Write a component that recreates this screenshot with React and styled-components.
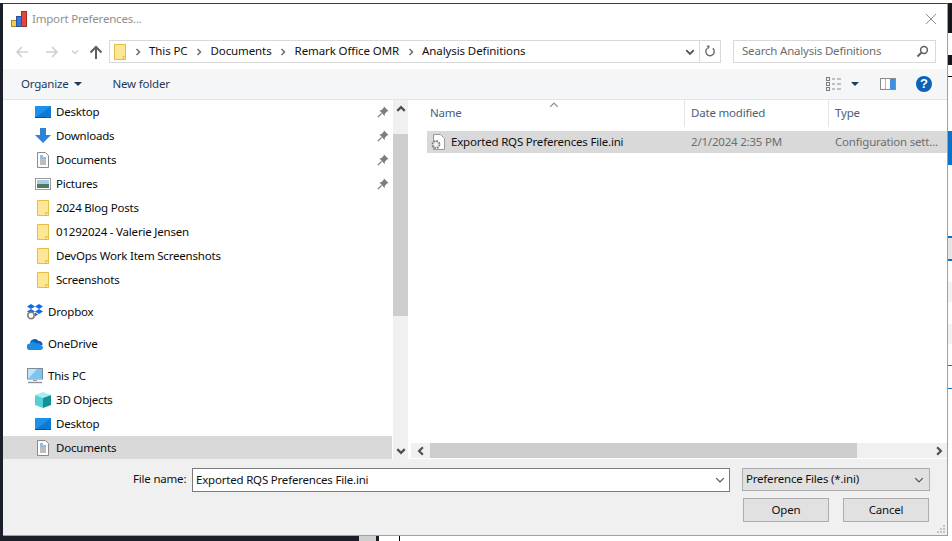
import React from 'react';
import styled, { createGlobalStyle } from 'styled-components';

const Global = createGlobalStyle`
  html, body { margin: 0; padding: 0; background: #fff; overflow: hidden; }
  * { box-sizing: border-box; }
  body { font-family: "Noto Sans", "Open Sans", sans-serif; font-size: 11.5px; letter-spacing: -0.2px; }
`;

const Screen = styled.div`
  width: 952px;
  height: 541px;
  display: flex;
  flex-direction: column;
  background: #fff;
  overflow: hidden;
`;
const TopGap = styled.div`
  height: 3px;
  flex: none;
`;
const Middle = styled.div`
  display: flex;
  height: 533px;
  flex: none;
`;
const LeftEdge = styled.div`
  width: 3px;
  background: #1b1f2a;
`;
const RightStrip = styled.div`
  width: 4px;
  display: flex;
  flex-direction: column;
`;
const Piece = styled.div`
  flex: none;
  height: ${p => p.$h}px;
  width: ${p => (p.$w ? `${p.$w}px` : 'auto')};
  background: ${p => p.$c};
`;
const BottomStrip = styled.div`
  display: flex;
  flex: 1;
`;

// text sits a pixel above the centre of its row, as Segoe UI does
const Label = styled.span`
  padding-bottom: 2px;
  white-space: nowrap;
`;

const Dialog = styled.div`
  width: 945px;
  display: flex;
  flex-direction: column;
  background: #fff;
  border-top: 1px solid #3a3d44;
  border-right: 1px solid #a0a0a0;
  border-bottom: 1px solid #a0a0a0;
`;

const TitleBar = styled.div`
  height: 30px;
  flex: none;
  display: flex;
  align-items: center;
  padding: 0 10px 0 8px;
  color: #8f8f8f;
`;
const TitleText = styled(Label)`
  margin-left: 5px;
  flex: 1;
`;

const NavBar = styled.div`
  height: 35px;
  flex: none;
  display: flex;
  align-items: center;
  padding: 2px 12px 2px 0;
`;
const NavButtons = styled.div`
  width: 106px;
  flex: none;
  display: flex;
  align-items: center;
  padding-left: 12px;
`;
const NavGap = styled.span`
  width: ${p => p.$w}px;
  flex: none;
`;
const AddressBox = styled.div`
  width: 612px;
  height: 23px;
  flex: none;
  display: flex;
  align-items: center;
  border: 1px solid #d9d9d9;
  padding-left: 2px;
`;
const AddressFolder = styled.span`
  width: 14px;
  height: 16px;
  flex: none;
  display: flex;
`;
const Crumb = styled(Label)`
  color: #111;
  letter-spacing: -0.1px;
`;
const CrumbSep = styled.span`
  width: 23px;
  display: flex;
  justify-content: center;
  flex: none;
`;
const Spacer = styled.div`
  flex: 1;
`;
const AddressEnd = styled.div`
  width: 40px;
  height: 100%;
  flex: none;
  display: flex;
  align-items: center;
`;
const AddressChevron = styled.div`
  width: 20px;
  height: 100%;
  display: flex;
  align-items: center;
  justify-content: center;
  border-right: 1px solid #d9d9d9;
`;
const RefreshCell = styled.div`
  flex: 1;
  display: flex;
  align-items: center;
  justify-content: center;
`;
const SearchBox = styled.div`
  width: 203px;
  height: 23px;
  margin-left: 12px;
  flex: none;
  display: flex;
  align-items: center;
  justify-content: space-between;
  border: 1px solid #d9d9d9;
  padding: 0 6px 0 8px;
  color: #6d6d6d;
`;

const Toolbar = styled.div`
  height: 31px;
  flex: none;
  display: flex;
  align-items: center;
  background: #f5f6f7;
  border-bottom: 1px solid #e5e5e5;
  padding: 0 15px 0 18px;
  color: #1e395b;
`;
const ToolLabel = styled(Label)`
  margin-left: ${p => p.$ml || 0}px;
`;
const ToolGap = styled.span`
  width: ${p => p.$w}px;
  flex: none;
`;
const ToolCaret = styled.span`
  width: 0;
  height: 0;
  margin-left: ${p => p.$ml}px;
  border-left: 4px solid transparent;
  border-right: 4px solid transparent;
  border-top: 4px solid #1e395b;
`;
const HelpBadge = styled.span`
  width: 16px;
  height: 16px;
  margin-left: 20px;
  border-radius: 50%;
  background: #0b62b8;
  color: #fff;
  font: bold 13px/16px "Liberation Sans", sans-serif;
  letter-spacing: 0;
  text-align: center;
`;

const Content = styled.div`
  flex: 1;
  min-height: 0;
  display: flex;
`;
const Sidebar = styled.div`
  width: 389px;
  flex: none;
  display: flex;
  flex-direction: column;
`;
const NavRow = styled.div`
  height: 24px;
  flex: none;
  display: flex;
  align-items: center;
  padding-left: ${p => p.$indent}px;
  padding-right: 3px;
  margin-top: ${p => p.$mt || 0}px;
  background: ${p => (p.$selected ? '#d9d9d9' : 'transparent')};
  color: #0a0a0a;
`;
const NavIcon = styled.span`
  width: 16px;
  height: 16px;
  flex: none;
  margin-right: 5px;
  display: flex;
`;
const VScroll = styled.div`
  width: 15px;
  margin-left: 1px;
  flex: none;
  display: flex;
  flex-direction: column;
  background: #f0f0f0;
`;
const ScrollButton = styled.div`
  height: 17px;
  flex: none;
  display: flex;
  align-items: center;
  justify-content: center;
`;
const VTrackStart = styled.div`
  height: 17px;
  flex: none;
`;
const VThumb = styled.div`
  height: 182px;
  flex: none;
  background: #cdcdcd;
`;
const ListPane = styled.div`
  flex: 1;
  min-width: 0;
  margin-left: 3px;
  display: flex;
  flex-direction: column;
`;
const HeaderRow = styled.div`
  height: 27px;
  flex: none;
  display: flex;
  padding-left: 16px;
  color: #4c607a;
`;
const HeaderCell = styled.div`
  width: ${p => p.$w}px;
  flex: none;
  padding: 5px 0 0 ${p => p.$pl}px;
  border-right: ${p => (p.$last ? 'none' : '1px solid #e5e5e5')};
  position: relative;
`;
const SortMark = styled.span`
  position: absolute;
  left: 122px;
  top: 0;
  display: flex;
`;
const FileRow = styled.div`
  height: 22px;
  margin: 4px 0 0 16px;
  flex: none;
  display: flex;
  align-items: center;
  background: #d9d9d9;
`;
const FileCell = styled.div`
  width: ${p => p.$w}px;
  flex: none;
  display: flex;
  align-items: center;
  white-space: nowrap;
  padding-left: ${p => p.$pl}px;
  color: ${p => p.$c || '#111'};
`;
const HScroll = styled.div`
  margin-top: auto;
  margin-bottom: 1px;
  height: 15px;
  flex: none;
  display: flex;
  background: #f0f0f0;
`;
const HButton = styled.div`
  width: ${p => p.$w}px;
  flex: none;
  display: flex;
  align-items: center;
  justify-content: center;
`;
const HThumb = styled.div`
  width: 427px;
  flex: none;
  background: #cdcdcd;
`;

const Footer = styled.div`
  height: 76px;
  flex: none;
  background: #f0f0f0;
  padding: 9px 0 0 130px;
  position: relative;
`;
const FieldRow = styled.div`
  display: flex;
  align-items: flex-start;
`;
const FieldLabel = styled.label`
  width: 59px;
  flex: none;
  line-height: 22px;
  color: #111;
`;
const FileInput = styled.div`
  width: 538px;
  height: 24px;
  flex: none;
  display: flex;
  align-items: center;
  justify-content: space-between;
  background: #fff;
  border: 1px solid #7a7a7a;
  padding: 0 4px 0 3px;
  color: #111;
`;
const FilterSelect = styled.div`
  width: 188px;
  height: 23px;
  margin-left: 12px;
  flex: none;
  display: flex;
  align-items: center;
  justify-content: space-between;
  background: #e1e1e1;
  border: 1px solid #adadad;
  padding: 0 5px 0 3px;
  color: #111;
`;
const ButtonRow = styled.div`
  display: flex;
  gap: 14px;
  justify-content: flex-end;
  margin-top: 6px;
  padding-right: 18px;
`;
const Button = styled.button`
  width: 86px;
  height: 24px;
  padding: 0 0 1px;
  background: #e1e1e1;
  border: 1px solid #adadad;
  color: #111;
  font: inherit;
  letter-spacing: inherit;
`;
const Gripper = styled.svg`
  position: absolute;
  right: 1px;
  bottom: 1px;
`;

const Chevron = ({ dir = 'down', color = '#6d6d6d', size = 8, sw = 1.5 }) => {
  const points = {
    down: '1,2.5 4,5.5 7,2.5',
    up: '1,5.5 4,2.5 7,5.5',
    left: '5.5,1 2.5,4 5.5,7',
    right: '2.5,1 5.5,4 2.5,7',
  };
  return (
    <svg width={size} height={size} viewBox="0 0 8 8">
      <polyline points={points[dir]} fill="none" stroke={color} strokeWidth={sw} />
    </svg>
  );
};

const Logo = () => (
  <svg width="16" height="16" viewBox="0 0 16 16">
    <rect x="0.5" y="9.5" width="5" height="6" fill="#f4cb45" stroke="#a98a24" />
    <rect x="5.5" y="5.5" width="5" height="10" fill="#3f74d6" stroke="#284f99" />
    <rect x="10.5" y="0.5" width="5" height="15" fill="#dd4a3c" stroke="#9c3026" />
  </svg>
);
const CloseIcon = () => (
  <svg width="12" height="12" viewBox="0 0 12 12">
    <path d="M1 1 L11 11 M11 1 L1 11" stroke="#8c8c8c" strokeWidth="1" />
  </svg>
);
const ArrowLeft = ({ color }) => (
  <svg width="14" height="14" viewBox="0 0 14 14">
    <path d="M13 7H2 M7 2 L2 7 L7 12" fill="none" stroke={color} strokeWidth="1.6" />
  </svg>
);
const ArrowRight = ({ color }) => (
  <svg width="14" height="14" viewBox="0 0 14 14">
    <path d="M1 7H12 M7 2 L12 7 L7 12" fill="none" stroke={color} strokeWidth="1.6" />
  </svg>
);
const ArrowUp = ({ color }) => (
  <svg width="14" height="14" viewBox="0 0 14 14">
    <path d="M7 14V2 M1.5 7.5 L7 2 L12.5 7.5" fill="none" stroke={color} strokeWidth="2" />
  </svg>
);
const Refresh = () => (
  <svg width="12" height="13" viewBox="0 0 12 13">
    <path d="M3.5 3.2 A4.2 4.2 0 1 0 8.8 3.4" fill="none" stroke="#6d6d6d" strokeWidth="1.4" />
    <path d="M2.5 0.5 L6 0.8 L4.4 4.2 Z" fill="#6d6d6d" />
  </svg>
);
const SearchIcon = () => (
  <svg width="13" height="13" viewBox="0 0 13 13">
    <circle cx="8" cy="5" r="3.4" fill="none" stroke="#5f5f5f" strokeWidth="1.5" />
    <path d="M5.4 7.6 L1.5 11.5" stroke="#5f5f5f" strokeWidth="2" />
  </svg>
);
const ViewIcon = () => (
  <svg width="16" height="14" viewBox="0 0 16 14">
    <g fill="none" stroke="#7b7b7b">
      <rect x="0.5" y="0.5" width="3" height="3" />
      <rect x="0.5" y="5.5" width="3" height="3" />
      <rect x="0.5" y="10.5" width="3" height="3" />
    </g>
    <path d="M6 2h3M11 2h4M6 7h3M11 7h4M6 12h3M11 12h4" stroke="#8b8b8b" />
  </svg>
);
const PaneIcon = () => (
  <svg width="16" height="12" viewBox="0 0 16 12">
    <rect x="0.5" y="0.5" width="15" height="11" fill="#fff" stroke="#8b8b8b" />
    <rect x="10" y="1" width="5" height="10" fill="#3d8fe0" />
    <path d="M5.5 1v10" stroke="#b5b5b5" />
  </svg>
);
const Folder = () => (
  <svg width="16" height="16" viewBox="0 0 16 16" style={{ flex: 'none' }}>
    <path d="M2.5 0.5H13.5V15.5H2.5Z" fill="#fde695" stroke="#e4bd45" />
    <path d="M11 15.5V12.5H13.5" fill="none" stroke="#e4bd45" />
  </svg>
);
const DesktopIcon = () => (
  <svg width="16" height="16" viewBox="0 0 16 16">
    <rect x="0" y="2" width="16" height="12" fill="#1b90ec" />
    <path d="M0 14L8 8 16 2V14Z" fill="#0f7ad2" />
    <path d="M0 13.5h16" stroke="#0d4f8b" strokeWidth="1" strokeDasharray="12 2 2" />
  </svg>
);
const DownloadIcon = () => (
  <svg width="16" height="16" viewBox="0 0 16 16">
    <path d="M5 0H11V7H16L8 15 0 7H5Z" fill="#2f83d6" />
  </svg>
);
const DocumentIcon = () => (
  <svg width="16" height="16" viewBox="0 0 16 16">
    <path d="M2.5 0.5H10.5L13.5 3.5V15.5H2.5Z" fill="#fff" stroke="#8a8a8a" />
    <path d="M5 4h3M5 6h6" stroke="#3778c2" />
    <path d="M5 8h6M5 10h6M5 12h6" stroke="#7d7d7d" />
  </svg>
);
const PictureIcon = () => (
  <svg width="16" height="16" viewBox="0 0 16 16">
    <rect x="0.5" y="2.5" width="15" height="11" fill="#fff" stroke="#9a9a9a" />
    <rect x="2" y="4" width="12" height="4" fill="#a9cbe6" />
    <rect x="2" y="8" width="12" height="4" fill="#4f7a5c" />
  </svg>
);
const DropboxIcon = () => (
  <svg width="16" height="16" viewBox="0 0 16 16">
    <path d="M4 0L8 2.5 4 5 0 2.5ZM12 0L16 2.5 12 5 8 2.5ZM4 5L8 7.5 4 10 0 7.5ZM12 5L16 7.5 12 10 8 7.5ZM8 8.5L11 10.5 8 12.5Z" fill="#1269e8" />
    <circle cx="4" cy="11.5" r="3.2" fill="#fff" stroke="#7f7f7f" strokeWidth="1.6" />
  </svg>
);
const CloudIcon = () => (
  <svg width="16" height="16" viewBox="0 0 16 16">
    <path d="M3 7A4.8 4.8 0 0 1 11.6 5 3.6 3.6 0 0 1 15.5 9L6 10Z" fill="#0a5cb4" />
    <path d="M3 14A3.2 3.2 0 0 1 2.8 7.6 3.8 3.8 0 0 1 9.2 7.6 3.2 3.2 0 0 1 13.6 9.2 2.4 2.4 0 0 1 13.6 14Z" fill="#1b8de2" />
  </svg>
);
const PcIcon = () => (
  <svg width="16" height="16" viewBox="0 0 16 16">
    <rect x="0.5" y="0.5" width="15" height="10.5" fill="#bfe3f7" stroke="#7d8b99" />
    <path d="M1 11L10 1H15V11Z" fill="#7fc4ee" />
    <path d="M6 12.5h4" stroke="#9a9a9a" />
    <path d="M1 14.5h14" stroke="#8b8f96" strokeWidth="1.4" />
  </svg>
);
const CubeIcon = () => (
  <svg width="16" height="16" viewBox="0 0 16 16">
    <path d="M8 0L16 3 8 6 0 3Z" fill="#a4eef0" />
    <path d="M0 3L8 6V16L0 13Z" fill="#53d0d6" />
    <path d="M16 3L8 6V16L16 13Z" fill="#138f9c" />
  </svg>
);
const PinIcon = () => (
  <svg width="12" height="12" viewBox="0 0 12 12">
    <path d="M7 0.5L11.5 5 10 5.6 8 7.6 7.6 10 2.5 4.6 4.6 4 6.5 2Z" fill="#7d7d7d" />
    <path d="M4.5 7.5L0.8 11.2" stroke="#7d7d7d" strokeWidth="1.2" />
  </svg>
);
const IniIcon = () => (
  <svg width="16" height="16" viewBox="0 0 16 16">
    <path d="M3.5 0.5H10.5L14.5 4.5V15.5H3.5Z" fill="#fff" stroke="#9a9a9a" />
    <circle cx="6" cy="10.5" r="3.6" fill="#e2e2e2" stroke="#757575" strokeWidth="1.6" strokeDasharray="1.8 1" />
    <circle cx="6" cy="10.5" r="1.2" fill="#fff" />
  </svg>
);

const quickAccess = [
  { label: 'Desktop', icon: <DesktopIcon />, pin: true },
  { label: 'Downloads', icon: <DownloadIcon />, pin: true },
  { label: 'Documents', icon: <DocumentIcon />, pin: true },
  { label: 'Pictures', icon: <PictureIcon />, pin: true },
  { label: '2024 Blog Posts', icon: <Folder /> },
  { label: '01292024 - Valerie Jensen', icon: <Folder /> },
  { label: 'DevOps Work Item Screenshots', icon: <Folder /> },
  { label: 'Screenshots', icon: <Folder /> },
];
const crumbs = ['This PC', 'Documents', 'Remark Office OMR', 'Analysis Definitions'];

const Separator = () => (
  <CrumbSep>
    <Chevron dir="right" color="#6d6d6d" />
  </CrumbSep>
);

export default function App() {
  return (
    <Screen>
      <Global />
      <TopGap />
      <Middle>
        <LeftEdge />
        <Dialog>
          <TitleBar>
            <Logo />
            <TitleText>Import Preferences...</TitleText>
            <CloseIcon />
          </TitleBar>
          <NavBar>
            <NavButtons>
              <ArrowLeft color="#cfcfcf" />
              <NavGap $w={16} />
              <ArrowRight color="#cfcfcf" />
              <NavGap $w={12} />
              <Chevron color="#cfcfcf" />
              <NavGap $w={10} />
              <ArrowUp color="#5f5f5f" />
            </NavButtons>
            <AddressBox>
              <AddressFolder>
                <Folder />
              </AddressFolder>
              <Separator />
              {crumbs.map((c, i) => (
                <React.Fragment key={c}>
                  {i > 0 && <Separator />}
                  <Crumb>{c}</Crumb>
                </React.Fragment>
              ))}
              <Spacer />
              <AddressEnd>
                <AddressChevron>
                  <Chevron color="#555" size={10} />
                </AddressChevron>
                <RefreshCell>
                  <Refresh />
                </RefreshCell>
              </AddressEnd>
            </AddressBox>
            <SearchBox>
              <Label>Search Analysis Definitions</Label>
              <SearchIcon />
            </SearchBox>
          </NavBar>
          <Toolbar>
            <ToolLabel>Organize</ToolLabel>
            <ToolCaret $ml={5} />
            <ToolLabel $ml={31}>New folder</ToolLabel>
            <Spacer />
            <ViewIcon />
            <ToolCaret $ml={9} />
            <ToolGap $w={21} />
            <PaneIcon />
            <HelpBadge>?</HelpBadge>
          </Toolbar>
          <Content>
            <Sidebar>
              {quickAccess.map(item => (
                <NavRow key={item.label} $indent={32}>
                  <NavIcon>{item.icon}</NavIcon>
                  <Label>{item.label}</Label>
                  <Spacer />
                  {item.pin && <PinIcon />}
                </NavRow>
              ))}
              <NavRow $indent={24} $mt={8}>
                <NavIcon><DropboxIcon /></NavIcon>
                <Label>Dropbox</Label>
              </NavRow>
              <NavRow $indent={24} $mt={8}>
                <NavIcon><CloudIcon /></NavIcon>
                <Label>OneDrive</Label>
              </NavRow>
              <NavRow $indent={24} $mt={8}>
                <NavIcon><PcIcon /></NavIcon>
                <Label>This PC</Label>
              </NavRow>
              <NavRow $indent={32}>
                <NavIcon><CubeIcon /></NavIcon>
                <Label>3D Objects</Label>
              </NavRow>
              <NavRow $indent={32}>
                <NavIcon><DesktopIcon /></NavIcon>
                <Label>Desktop</Label>
              </NavRow>
              <NavRow $indent={32} $selected>
                <NavIcon><DocumentIcon /></NavIcon>
                <Label>Documents</Label>
              </NavRow>
            </Sidebar>
            <VScroll>
              <ScrollButton>
                <Chevron dir="up" color="#505050" size={10} sw={1.8} />
              </ScrollButton>
              <VTrackStart />
              <VThumb />
              <Spacer />
              <ScrollButton>
                <Chevron dir="down" color="#505050" size={10} sw={1.8} />
              </ScrollButton>
            </VScroll>
            <ListPane>
              <HeaderRow>
                <HeaderCell $w={258} $pl={3}>
                  <SortMark>
                    <Chevron dir="up" color="#8a8a8a" size={10} sw={1} />
                  </SortMark>
                  Name
                </HeaderCell>
                <HeaderCell $w={144} $pl={6}>Date modified</HeaderCell>
                <HeaderCell $w={118} $pl={6} $last>Type</HeaderCell>
              </HeaderRow>
              <FileRow>
                <FileCell $w={258} $pl={3}>
                  <NavIcon><IniIcon /></NavIcon>
                  <Label>Exported RQS Preferences File.ini</Label>
                </FileCell>
                <FileCell $w={144} $pl={6} $c="#6d6d6d">
                  <Label>2/1/2024 2:35 PM</Label>
                </FileCell>
                <FileCell $w={118} $pl={6} $c="#6d6d6d">
                  <Label>Configuration sett...</Label>
                </FileCell>
              </FileRow>
              <HScroll>
                <HButton $w={19}>
                  <Chevron dir="left" color="#505050" size={10} sw={1.8} />
                </HButton>
                <HThumb />
                <Spacer />
                <HButton $w={17}>
                  <Chevron dir="right" color="#505050" size={10} sw={1.8} />
                </HButton>
              </HScroll>
            </ListPane>
          </Content>
          <Footer>
            <FieldRow>
              <FieldLabel>File name:</FieldLabel>
              <FileInput>
                <Label>Exported RQS Preferences File.ini</Label>
                <Chevron color="#555" size={10} sw={1} />
              </FileInput>
              <FilterSelect>
                <Label>Preference Files (*.ini)</Label>
                <Chevron color="#555" size={10} sw={1} />
              </FilterSelect>
            </FieldRow>
            <ButtonRow>
              <Button>Open</Button>
              <Button>Cancel</Button>
            </ButtonRow>
            <Gripper width="9" height="9" viewBox="0 0 9 9">
              <path d="M6 0h2v2H6zM3 3h2v2H3zM6 3h2v2H6zM0 6h2v2H0zM3 6h2v2H3zM6 6h2v2H6z" fill="#c4c4c4" />
            </Gripper>
          </Footer>
        </Dialog>
        <RightStrip>
          <Piece $h={30} $c="#14161c" />
          <Piece $h={22} $c="#fff" />
          <Piece $h={10} $c="#14161c" />
          <Piece $h={11} $c="#fff" />
          <Piece $h={1} $c="#000" />
          <Piece $h={54} $c="#fff" />
          <Piece $h={34} $c="#0a72c8" />
          <Piece $h={71} $c="#fff" />
          <Piece $h={2} $c="#0a72c8" />
          <Piece $h={21} $c="#e6e6e6" />
          <Piece $h={2} $c="#0a72c8" />
          <Piece $h={21} $c="#fff" />
          <Piece $h={20} $c="#f2f2f2" />
          <Piece $h={22} $c="#fff" />
          <Piece $h={20} $c="#f2f2f2" />
          <Piece $h={21} $c="#fff" />
          <Piece $h={1} $c="#0a72c8" />
          <Piece $h={22} $c="#fff" />
          <Piece $h={1} $c="#0a72c8" />
        </RightStrip>
      </Middle>
      <BottomStrip>
        <Piece $w={359} $h={5} $c="#1b1f2a" />
        <Piece $w={17} $h={5} $c="#cfcfcf" />
        <Piece $w={3} $h={5} $c="#1b1f2a" />
        <Piece $w={20} $h={5} $c="#fff" />
        <Piece $w={1} $h={5} $c="#000" />
      </BottomStrip>
    </Screen>
  );
}
